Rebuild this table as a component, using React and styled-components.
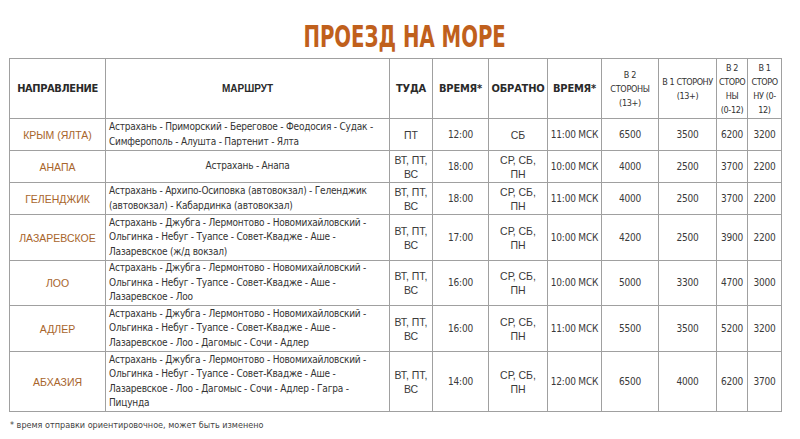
import React from "react";
import styled, { createGlobalStyle } from "styled-components";

const Global = createGlobalStyle`
  html, body { margin: 0; padding: 0; background: #fff; }
  body { font-family: "DejaVu Sans Condensed", "DejaVu Sans", sans-serif; }
`;

const COND = '"DejaVu Sans Condensed", "DejaVu Sans", sans-serif';
const ARIAL = '"Liberation Sans", Arial, sans-serif';

const Page = styled.div`
  width: 800px;
  height: 439px;
  box-sizing: border-box;
  padding: 0 19px 0 9px;
  display: flex;
  flex-direction: column;
  overflow: hidden;
`;

const Title = styled.h1`
  flex-shrink: 0;
  margin: 0;
  height: 58px;
  box-sizing: border-box;
  padding: 15px 0 0 20px;
  display: flex;
  align-items: center;
  justify-content: center;
  color: #c0601c;
  font-family: ${COND};
  font-weight: bold;
  font-size: 30px;
  line-height: 30px;
`;

const TitleText = styled.span`
  display: inline-block;
  transform: scaleX(0.73);
  white-space: nowrap;
`;

const Table = styled.table`
  flex-shrink: 0;
  border-collapse: collapse;
  table-layout: fixed;
  width: 772px;
  color: #333;
`;

const HeadRow = styled.tr`
  height: 60px;
`;

const Th = styled.th`
  border: 1px solid #a0a0a0;
  font-weight: ${(p) => (p.$light ? "normal" : "bold")};
  font-family: ${(p) => (p.$arial ? ARIAL : COND)};
  font-size: ${(p) => p.$size || 11}px;
  letter-spacing: ${(p) => p.$ls ?? -0.2}px;
  line-height: 14px;
  color: ${(p) => (p.$light ? "#333" : "#2a2a2a")};
  text-align: center;
  white-space: nowrap;
  padding: 0;
`;

const Row = styled.tr`
  height: ${(p) => p.$h}px;
`;

const Dest = styled.td`
  border: 1px solid #a0a0a0;
  font-family: ${ARIAL};
  font-size: 10.5px;
  color: #a8652c;
  text-align: center;
  white-space: nowrap;
  padding: 0;
`;

const Route = styled.td`
  border: 1px solid #a0a0a0;
  font-family: ${COND};
  font-size: 10px;
  letter-spacing: -0.2px;
  line-height: 14.5px;
  color: #333;
  text-align: ${(p) => (p.$center ? "center" : "left")};
  white-space: nowrap;
  padding: 0 3px;
`;

const Cell = styled.td`
  border: 1px solid #a0a0a0;
  font-family: ${(p) => (p.$arial ? ARIAL : COND)};
  font-size: ${(p) => (p.$arial ? 10.5 : 10)}px;
  letter-spacing: ${(p) => (p.$arial ? 0 : -0.2)}px;
  line-height: 14px;
  color: #3a3a3a;
  text-align: center;
  padding: 0;
`;

const Note = styled.div`
  flex-shrink: 0;
  margin-top: 8px;
  font-family: ${COND};
  font-size: 9px;
  color: #444;
  padding-left: 1px;
  white-space: nowrap;
`;

const L1 = "Астрахань - Джубга - Лермонтово - Новомихайловский -";
const L2 = "Ольгинка - Небуг - Туапсе - Совет-Квадже - Аше -";

const rows = [
  {
    h: 32,
    dest: "КРЫМ (ЯЛТА)",
    route: ["Астрахань - Приморский - Береговое - Феодосия - Судак -", "Симферополь - Алушта - Партенит - Ялта"],
    there: ["ПТ"],
    t1: "12:00",
    back: ["СБ"],
    t2: "11:00 МСК",
    p: ["6500", "3500", "6200", "3200"],
  },
  {
    h: 32,
    dest: "АНАПА",
    route: ["Астрахань - Анапа"],
    center: true,
    there: ["ВТ, ПТ,", "ВС"],
    t1: "18:00",
    back: ["СР, СБ,", "ПН"],
    t2: "10:00 МСК",
    p: ["4000", "2500", "3700", "2200"],
  },
  {
    h: 32,
    dest: "ГЕЛЕНДЖИК",
    route: ["Астрахань - Архипо-Осиповка (автовокзал) - Геленджик", "(автовокзал) - Кабардинка (автовокзал)"],
    there: ["ВТ, ПТ,", "ВС"],
    t1: "18:00",
    back: ["СР, СБ,", "ПН"],
    t2: "11:00 МСК",
    p: ["4000", "2500", "3700", "2200"],
  },
  {
    h: 46,
    dest: "ЛАЗАРЕВСКОЕ",
    route: [L1, L2, "Лазаревское (ж/д вокзал)"],
    there: ["ВТ, ПТ,", "ВС"],
    t1: "17:00",
    back: ["СР, СБ,", "ПН"],
    t2: "10:00 МСК",
    p: ["4200", "2500", "3900", "2200"],
  },
  {
    h: 45,
    dest: "ЛОО",
    route: [L1, L2, "Лазаревское - Лоо"],
    there: ["ВТ, ПТ,", "ВС"],
    t1: "16:00",
    back: ["СР, СБ,", "ПН"],
    t2: "10:00 МСК",
    p: ["5000", "3300", "4700", "3000"],
  },
  {
    h: 46,
    dest: "АДЛЕР",
    route: [L1, L2, "Лазаревское - Лоо - Дагомыс - Сочи - Адлер"],
    there: ["ВТ, ПТ,", "ВС"],
    t1: "16:00",
    back: ["СР, СБ,", "ПН"],
    t2: "11:00 МСК",
    p: ["5500", "3500", "5200", "3200"],
  },
  {
    h: 60,
    dest: "АБХАЗИЯ",
    route: [L1, L2, "Лазаревское - Лоо - Дагомыс - Сочи - Адлер - Гагра -", "Пицунда"],
    there: ["ВТ, ПТ,", "ВС"],
    t1: "14:00",
    back: ["СР, СБ,", "ПН"],
    t2: "12:00 МСК",
    p: ["6500", "4000", "6200", "3700"],
  },
];

const widths = [96, 284, 43, 56, 59, 54, 57, 58, 31, 34];

function Lines({ lines }) {
  return lines.map((l, i) => (
    <React.Fragment key={i}>
      {l}
      {i < lines.length - 1 && <br />}
    </React.Fragment>
  ));
}

export default function App() {
  return (
    <>
      <Global />
      <Page>
        <Title>
          <TitleText>ПРОЕЗД НА МОРЕ</TitleText>
        </Title>
        <Table>
          <colgroup>
            {widths.map((w, i) => (
              <col key={i} style={{ width: w }} />
            ))}
          </colgroup>
          <thead>
            <HeadRow>
              <Th $ls={-0.4}>НАПРАВЛЕНИЕ</Th>
              <Th $arial $size={10} $ls={0}>МАРШРУТ</Th>
              <Th>ТУДА</Th>
              <Th>ВРЕМЯ*</Th>
              <Th>ОБРАТНО</Th>
              <Th>ВРЕМЯ*</Th>
              <Th $light $size={9} $ls={-0.3}>
                <Lines lines={["В 2", "СТОРОНЫ", "(13+)"]} />
              </Th>
              <Th $light $size={9} $ls={-0.4}>
                <Lines lines={["В 1 СТОРОНУ", "(13+)"]} />
              </Th>
              <Th $light $size={9} $ls={-0.4}>
                <Lines lines={["В 2", "СТОРО", "НЫ", "(0-12)"]} />
              </Th>
              <Th $light $size={9} $ls={-0.4}>
                <Lines lines={["В 1", "СТОРО", "НУ (0-", "12)"]} />
              </Th>
            </HeadRow>
          </thead>
          <tbody>
            {rows.map((r) => (
              <Row key={r.dest} $h={r.h}>
                <Dest>{r.dest}</Dest>
                <Route $center={r.center}>
                  <Lines lines={r.route} />
                </Route>
                <Cell $arial>
                  <Lines lines={r.there} />
                </Cell>
                <Cell>{r.t1}</Cell>
                <Cell $arial>
                  <Lines lines={r.back} />
                </Cell>
                <Cell>{r.t2}</Cell>
                {r.p.map((v, i) => (
                  <Cell key={i}>{v}</Cell>
                ))}
              </Row>
            ))}
          </tbody>
        </Table>
        <Note>* время отправки ориентировочное, может быть изменено</Note>
      </Page>
    </>
  );
}
